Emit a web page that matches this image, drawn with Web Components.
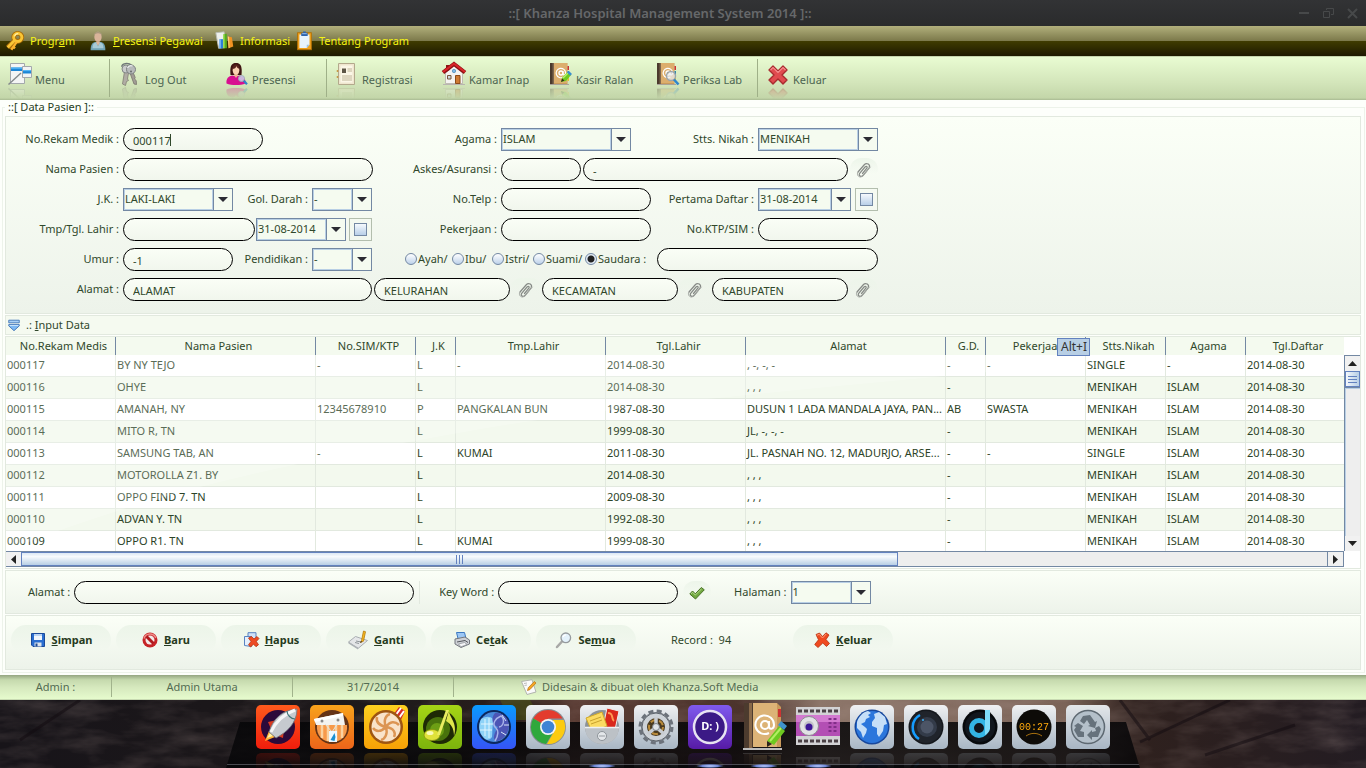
<!DOCTYPE html>
<html lang="id">
<head>
<meta charset="utf-8">
<title>::[ Khanza Hospital Management System 2014 ]::</title>
<style>
  :root {
    --ink: #30482b;
    --ink-soft: #536b52;
    --line: #e2e9df;
    --steel: #7388a3;
    --sky: #b8cfe5;
    --panel-top: #fbfff7;
    --panel-end: #edf3ea;
    --fs: 11px;
    --ctl: 23px;
  }
  body {
    margin: 0;
    font: var(--fs)/14px "Noto Sans", "Open Sans", sans-serif;
    color: var(--ink);
    background: #14100f;
  }
</style>
</head>
<body>
<kz-app>
  <kz-titlebar slot="top">::[ Khanza Hospital Management System 2014 ]::</kz-titlebar>
  <kz-menubar slot="top">
    <kz-menu-item icon="keys">Progr<u>a</u>m</kz-menu-item>
    <kz-menu-item icon="person"><u>P</u>resensi Pegawai</kz-menu-item>
    <kz-menu-item icon="chart">Informasi</kz-menu-item>
    <kz-menu-item icon="clipboard">Tentan<u>g</u> Program</kz-menu-item>
  </kz-menubar>
  <kz-toolbar slot="top">
    <kz-tool-group>
      <kz-tool icon="menu">Menu</kz-tool>
    </kz-tool-group>
    <kz-tool-group>
      <kz-tool icon="logout">Log Out</kz-tool>
      <kz-tool icon="woman">Presensi</kz-tool>
    </kz-tool-group>
    <kz-tool-group>
      <kz-tool icon="register">Registrasi</kz-tool>
      <kz-tool icon="house">Kamar Inap</kz-tool>
      <kz-tool icon="bookpen">Kasir Ralan</kz-tool>
      <kz-tool icon="booklens">Periksa Lab</kz-tool>
    </kz-tool-group>
    <kz-tool-group last>
      <kz-tool icon="cross">Keluar</kz-tool>
    </kz-tool-group>
  </kz-toolbar>

  <kz-panel><kz-patient-form></kz-patient-form></kz-panel>
  <kz-panel flat><kz-section-toggle>.: <u>I</u>nput Data</kz-section-toggle></kz-panel>
  <kz-panel flat grow><kz-patient-table></kz-patient-table></kz-panel>
  <kz-panel><kz-search-bar></kz-search-bar></kz-panel>
  <kz-panel>
    <kz-actions>
      <kz-action icon="disk"><u>S</u>impan</kz-action>
      <kz-action icon="forbid"><u>B</u>aru</kz-action>
      <kz-action icon="docdel"><u>H</u>apus</kz-action>
      <kz-action icon="edit"><u>G</u>anti</kz-action>
      <kz-action icon="printer">Ce<u>t</u>ak</kz-action>
      <kz-action icon="lens">Se<u>m</u>ua</kz-action>
      <span slot="record">Record :&nbsp; 94</span>
      <kz-action slot="end" icon="redx"><u>K</u>eluar</kz-action>
    </kz-actions>
  </kz-panel>

  <kz-statusbar slot="bottom"></kz-statusbar>
  <kz-dock slot="bottom"></kz-dock>
</kz-app>

<script>
const book = `
  <path d="M4 1h14.500v21H4z" fill="#c99a5b"/><path d="M5 1h13v20H5z" fill="#dcae6d"/>
  <path d="M1 1h4v21H1z" fill="#4b3a2d"/><path d="M3.500 1H5v21H3.500z" fill="#7d654d"/>
  <path d="M18.500 4H20v4h-1.500z" fill="#c33"/><path d="M18.500 9H20v4h-1.500z" fill="#38a"/><path d="M18.500 14H20v5h-1.500z" fill="#dfc331"/>
  <path d="M1 22.500h19" stroke="#a9a39b"/>
  <circle cx="12" cy="11" r="2" fill="none" stroke="#fff" stroke-width="1.300"/>
  <path d="M14 9v3.200c.4 1.300 2.600 1 2.600-1.200a4.700 4.700 0 1 0-2.200 4" fill="none" stroke="#fff" stroke-width="1.200"/>`;

const tile = (top, end, body) => `
  <defs><linearGradient id="t" x2="0" y2="1"><stop stop-color="${top}"/><stop offset="1" stop-color="${end}"/></linearGradient></defs>
  <rect width="44" height="44" rx="5" fill="url(#t)"/>${body}`;

const ICONS = {
  keys: [24, `
    <g fill="none" stroke="#a86a08" stroke-width="5"><circle cx="15" cy="8" r="4.500"/><path d="M12 11 4 19M11 15l-4 6"/></g>
    <g fill="none" stroke="#f9c534" stroke-width="3.200"><circle cx="15" cy="8" r="4.500"/><path d="M12 11 4 19"/></g>
    <path d="M14 13 8 21.500M10 18l2 2" fill="none" stroke="#fbb32c" stroke-width="2.500"/>
    <path d="M11.500 7a4 4 0 0 1 4-3" fill="none" stroke="#fff1ab" stroke-width="1.200"/>`],
  person: [24, `
    <path d="M4 22c-.2-6 2-8.500 5-9h6c3 .5 5.200 3 5 9z" fill="#6fa3b5"/><path d="M6 20c0-4 1-6 4-6.500L12 18l2-4.500c3 .5 4 2.500 4 6.500z" fill="#a8cbd6"/>
    <path d="m9.500 12.500 2.500 5 2.500-5z" fill="#dfb79b"/><ellipse cx="12" cy="7.500" rx="4" ry="5.500" fill="#d9b49a"/>
    <path d="M7.600 7C7 .3 17 .3 16.400 7c-1-2.800-2-3.500-4.400-3.500S8.600 4.200 7.600 7z" fill="#a9997c"/>`],
  chart: [24, `
    <path d="m2 3 9-1 2 17-8 1z" fill="#eef0ec" stroke="#b9bdb5"/>
    <path d="M6 10h4v10H6z" fill="#2c7fd6"/><path d="M6 10h1.500v10H6z" fill="#7ab9f3"/>
    <path d="m10 5 4-1v16h-4z" fill="#53ae1e"/><path d="m10 5 1.500-.4V20H10z" fill="#a9e45b"/>
    <path d="m15 7 4.500 1L21 18l-5 2z" fill="#f09322"/><path d="m15 7 1.500.3L17 19.500l-1 .5z" fill="#ffd07b"/>`],
  clipboard: [24, `
    <rect x="5" y="3" width="15" height="18.500" fill="#f0a21d" stroke="#b26f05"/>
    <path d="M7 5h11v11l-3 3.500H7z" fill="#e8f4fd"/><path d="M18 16h-3v3.500z" fill="#9cc4e4"/>
    <path d="M9 3h2V1.500h3V3h2v3.500H9z" fill="#2e64ad"/><path d="M10 4h5" stroke="#9cc5f0"/>`],
  menu: [24, `
    <path d="M2.500 1.500h14v20h-14z" fill="#f4f5f5" stroke="#a3a8ab"/><path d="M3 5.500h13V9H3z" fill="#1c86d6"/><path d="M3 5.500h13v1.300H3z" fill="#56b6f5"/>
    <path d="M14.500 4.500h9v11h-9z" fill="#f1f3f4" stroke="#a3a8ab"/><path d="M15 8h8v3.500h-8z" fill="#1c86d6"/><path d="M15 8h8v1.200h-8z" fill="#56b6f5"/>
    <path d="M.5 22.500 13 11" stroke="#83888a" stroke-width="1.400"/>`],
  logout: [24, `
    <path d="M4 5C3 1.500 10 .2 14 3.500" fill="none" stroke="#6f7777" stroke-width="1.400"/>
    <path d="M6.500 9.500 4.500 22l3 1.500 1-4 2-1-1-1.500 1-6z" fill="#b1ada5" stroke="#827d74" stroke-width=".8"/>
    <path d="m12 11 4 11 2.500.5-.3-4-1.700-1.500.7-1.500L14.500 9z" fill="#a29e96" stroke="#77726b" stroke-width=".8"/>
    <circle cx="8" cy="7" r="4" fill="#c9cbcb" stroke="#838787"/><circle cx="13" cy="7.500" r="4.500" fill="#b7baba" stroke="#7c8080"/>
    <path d="M9.500 6a4 4 0 0 1 5-2" fill="none" stroke="#edf0f0" stroke-width="1.200"/><circle cx="13" cy="9.500" r="1" fill="#686c6c"/>`],
  woman: [24, `
    <path d="M5.500 13C4.500 3 7 1 11 1s6.500 2 5.500 12z" fill="#3f1512"/>
    <path d="M1.500 21.500c-.5-5 2-7.500 6-8l3.500 1 3.500-1c4 .5 6.500 3.500 6 8-5 2-14 2-19 0z" fill="#d80f90"/>
    <path d="M9.300 11h3.400v2.500L11 16l-1.700-2.500z" fill="#edb48d"/><ellipse cx="11" cy="8.300" rx="3.300" ry="4.200" fill="#f9d2b1"/>
    <path d="M7.500 7c2 0 3.500-1 4-3 .5 2 1.500 2.500 3 3-.5-4-2-4.500-3.500-4.500S7.500 3.500 7.500 7z" fill="#57221b"/>
    <circle cx="16.500" cy="16.500" r="3" fill="#c9e0f1" fill-opacity=".8" stroke="#9dabb5"/><path d="m18.800 18.800 3.200 3.400" stroke="#2d84c8" stroke-width="2.200"/>`],
  register: [24, `
    <path d="M3.500 1.500h16v21h-16z" fill="#efe6ce" stroke="#b3a98c"/><path d="M5.500 3.500h12v17h-12z" fill="#fbf6e6"/>
    <path d="M7 6.500h4V11H7z" fill="#5e5647"/><path d="M12.500 7H17M12.500 9H17M7 14h10M7 16h10M7 18h10" stroke="#c0b698"/>
    <path d="M2.500 8v2M2.500 14v2" stroke="#c89a49" stroke-width="1.500"/>`],
  house: [24, `
    <path d="M3.500 11 12 4l8.500 7v10.500h-17z" fill="#f5f3f1" stroke="#b5afaa" stroke-width=".8"/>
    <path d="M4 3h3.500v5L4 10z" fill="#8d1717"/>
    <path d="M1 10.500 12 2l11 8.500" fill="none" stroke="#8c0f12" stroke-width="4"/><path d="M1 10 12 1.600 23 10" fill="none" stroke="#d8252a" stroke-width="2.200"/>
    <circle cx="12" cy="9" r="1.700" fill="#7cb9e6" stroke="#4b87b8" stroke-width=".7"/>
    <path d="M5.500 13.500H9V17H5.500z" fill="#cfd8dc" stroke="#77553a"/><path d="M13.500 13.500H18v8h-4.500z" fill="#cf7a33" stroke="#8c4b18"/>
    <path d="M1 22.500h22" stroke="#b9b5b0"/>`],
  bookpen: [24, book + `<path d="m12 20 1.500-5 5-5 3.500 3-5 6z" fill="#6ecb1f"/><path d="m14 16 5-5" stroke="#b5f16b" stroke-width="1.500"/><path d="m18 10.500 2-1.500 3 3-1.700 1.700z" fill="#3b8fd0"/><path d="m12 20 1-3.500 2.500 2z" fill="#33271b"/>`],
  booklens: [24, book + `<circle cx="15" cy="14" r="4.500" fill="#e8eef2" fill-opacity=".7" stroke="#9aa5ad" stroke-width="1.400"/><path d="m18 17.500 4.500 5" stroke="#2f86cc" stroke-width="2.600"/>`],
  cross: [24, `
    <path d="m3 8 4-4 5 5 5-5 4 4-5 5 5 5-4 4-5-5-5 5-4-4 5-5z" fill="#e04b4f" stroke="#a82a2e" stroke-width="1.400" stroke-linejoin="round"/>
    <path d="m4.500 8 2.500-2.500 5 5 5-5L19.500 8" fill="none" stroke="#f58d8d" stroke-width="1.200"/>`],
  clip: [16, `
    <path d="m2 10 6.500-7.500c2-2.200 6.500 0 4.500 3.500l-6 7.500c-1.600 1.800-4.600.6-3.500-2L9 5c1.400-1.400 2.700-.2 2 1l-4.500 5.500" fill="none" stroke="#868a86" stroke-width="1.200" stroke-linecap="round"/>
    <path d="M2 10c-1.500 2.500.2 5 2.500 5 2.500-.2 3.500-2.500 5-4l5-6.200" fill="none" stroke="#a5a9a4"/>`],
  down: [16, `<path d="M2 2.500h12v3H2z" fill="#a9d1f7" stroke="#3f72b5"/><path d="M2 7.500h12V9l-6 5.500L2 9z" fill="#7fb9f3" stroke="#3f72b5"/><path d="M3 8.500h10" stroke="#d7ebff"/>`],
  check: [16, `<path d="m.8 9 2.700-3L6.300 8.800l6-6.300 3 2.300L6.500 14z" fill="#72a942" stroke="#4a7227" stroke-linejoin="round"/><path d="m2 8.800 1.600-1.500L6.300 10l6.200-6" fill="none" stroke="#b5d98c"/>`],
  disk: [16, `<path d="M1.500 1.500h13v13H3l-1.500-1.500z" fill="#2a6ed0" stroke="#1b4a9b"/><path d="M4 2h8v6H4z" fill="#f1f6fc"/><path d="M4 3h8" stroke="#87b4ec"/><path d="M4.500 10.500h7v4h-7z" fill="#dfe5ec"/><path d="M5.500 11.500h2v3h-2z" fill="#1f4c94"/>`],
  forbid: [16, `<circle cx="8" cy="8" r="7.500" fill="#c62427"/><circle cx="8" cy="8" r="4.500" fill="#f4e9e8"/><path d="m4.500 4.500 7 7" stroke="#b01a1e" stroke-width="3"/><path d="M2 6.500A6.200 6.200 0 0 1 13.800 6" fill="none" stroke="#ef8b88" stroke-width="1.500"/>`],
  docdel: [16, `<path d="M5 .7h8v9H5z" fill="#cfe1f8" stroke="#5883c2"/><path d="M1.500 4.500h7v10l-7-1z" fill="#e5effc" stroke="#5883c2"/><path d="m5.500 6 3-1.500L11 7l3-2.500 2 2L13.300 9.500l2.200 3.200-2.500 2-2.500-2.500L7.500 15l-2-2.300L8 9.500z" fill="#ee4b23" stroke="#b83312" stroke-width=".8"/>`],
  edit: [20, `<path d="m.5 12 7-5.500 12 4L10 18.500z" fill="#e4e6e8" stroke="#a8adb1"/><path d="m.5 12 9.500 5.500v2L.5 13.500z" fill="#adb2b6"/><path d="m8 11 5 1M7 12.500l4 1" stroke="#8f9599"/><path d="m12.500 12.500 1-1.800L15.500 1l2 .7-2 9.500z" fill="#f8b81e" stroke="#b37a0a" stroke-width=".8"/><path d="m12.300 13 .5-2 1.500.8z" fill="#333"/>`],
  printer: [16, `<path d="M2.500.5h8l1.500 6H4z" fill="#9cc7f5" stroke="#3b78c2"/><path d="m1 7 10-2 4.500 3v4L7 15.500 1 12z" fill="#cdd0d5" stroke="#73777e"/><path d="m3 10 8-1.500 3 2" stroke="#55585e" fill="none"/><path d="m4.500 12 6-1.500 2.500 2-6 2.300z" fill="#f5f6f8" stroke="#8a8e94" stroke-width=".7"/>`],
  lens: [16, `<path d="m1 15 5-5.500" stroke="#a8a8a6" stroke-width="2.500" stroke-linecap="round"/><circle cx="9.800" cy="5.800" r="4.800" fill="#e4f2fb" stroke="#959a9d" stroke-width="1.300"/><path d="M7 5a3 3 0 0 1 3-2.200" stroke="#fff" fill="none" stroke-width="1.300"/>`],
  redx: [16, `<path d="M2 2.500 5.500 1l3 3.500L12 .8l3 2.200-3 4.500 3.500 4-3 3L8.800 11 4 15.500l-3.300-3L4.500 7.800z" fill="#ef4a20" stroke="#b7310e" stroke-width=".8" stroke-linejoin="round"/><path d="m2.800 3.300 2.500-1L8.500 6l3.700-4" fill="none" stroke="#fd9a78"/>`],
  note: [16, `<path d="M.5 2.500 11 .7 15 13l-9 2.500z" fill="#fafafa" stroke="#b2b5ae"/><path d="m3 4.500 3-.5M3.500 6.500 6 6" stroke="#bbb"/><path d="m6.500 11.500.8-2.800 6-6.200 1.700 1.500-6 6.500z" fill="#f6a623" stroke="#b4700e" stroke-width=".7"/>`],

  rocket: [44, tile('#ff5a1c', '#f01d0c', `
    <circle cx="22" cy="22" r="17" fill="#2b0a3a"/>
    <path d="m12 17 9-2-6 9zM28 24l-1 9-8-3z" fill="#d83920"/><path d="m9 36 4-10 6 6z" fill="#ffb43c"/><path d="m11 33 3-5 3 3z" fill="#fff6a8"/>
    <path d="M13 27C17 14 26 5 41 4c0 14-10 23-21 29z" fill="#c6cacf" stroke="#70757c" stroke-width=".8"/><path d="M15 27C20 16 28 9 39 5" stroke="#f5f6f7" stroke-width="3" fill="none"/>
    <path d="M31 6c0 4 4 8 8 8" stroke="#3f7475" stroke-width="1.200" fill="none"/>`)],
  store: [44, tile('#f8a21b', '#ec641a', `
    <circle cx="22" cy="22" r="17" fill="#653316"/><path d="M7 20h30c1 10-5 17-15 17S6 30 7 20z" fill="#f79a4b"/>
    <path d="M12 20v13M18 20v16M26 20v16M32 20v13" stroke="#fbd2a0" stroke-width="2.500"/>
    <path d="m4 14 29-6 2 12H6z" fill="#f3f3f1"/><path d="m4 14 29-6v3L5 17z" fill="#fff"/><circle cx="12" cy="16" r="1.500" fill="#888"/><circle cx="28" cy="15" r="1.500" fill="#888"/>
    <path d="m15 19 7 8 6-9" fill="none" stroke="#dce6ea"/><path d="M19 26h8v11h-8z" fill="#eef7fc"/><path d="m20.500 35 4-7 1 4-1 4z" fill="#1a8fd1"/>`)],
  candy: [44, tile('#fdd020', '#f6a006', `
    <path d="m29 10 6-8 6 4-4 9z" fill="#d62b2b"/><path d="m31 11 6-8M35 13l5-7" stroke="#fff" stroke-width="2"/>
    <circle cx="22" cy="22" r="17" fill="#9e5511"/><circle cx="22" cy="22" r="14.500" fill="#f9e3ca"/>
    <path d="M22 22c-8-2-10-6-9-10M22 22c-3-7 0-12 4-13M22 22c4-6 9-6 13-2M22 22c8 1 10 6 8 10M22 22c2 7-1 12-5 13M22 22c-5 5-10 5-13 1" fill="none" stroke="#dc9554" stroke-width="2.500"/>`)],
  music: [44, tile('#a6d516', '#7cb40c', `
    <circle cx="22" cy="22" r="17" fill="#1e2a05"/><circle cx="20" cy="24" r="12" fill="#49730c"/><circle cx="19" cy="25" r="7" fill="#6d9f14"/>
    <ellipse cx="14" cy="30" rx="8" ry="5.500" fill="#dfe23a" stroke="#8a9410" stroke-width=".8"/><path d="M19 30 28 5h3l-9 25z" fill="#e9ec62"/>
    <path d="M31 5c0 8 9 12 5 26 0-8-3-12-8-15z" fill="#dfe64c"/><ellipse cx="12" cy="28" rx="3.500" ry="2" fill="#f9fab6"/>`)],
  film: [44, tile('#0a9bff', '#3554f5', `
    <circle cx="22" cy="22" r="17" fill="#0c285f"/><circle cx="22" cy="22" r="15" fill="#4a8bdb"/>
    <path d="M9 14c5-3 9-3 12 0l-1 18c-3 4-6 3-8 1-5-5-6-12-3-19z" fill="#8fd3f8"/>
    <path d="M23 8c9-1 14 6 14 13-1 9-6 14-12 15-6-1-2-9 1-14-5-2-8-8-3-14z" fill="#4c55b5"/>
    <path d="M27 22c5-1 6-8 2-11-5 2-10 8-5 12 3 3 2 8-1 13" fill="none" stroke="#a9b4ea" stroke-width="1.500"/>
    <path d="M13 14v17M17 13v20M9 19h12M8 25h12M30 10l4 6M32 20h5M29 27l5 3" stroke="#e9f8ff" stroke-width=".9"/>`)],
  chrome: [44, tile('#eff0f2', '#a8b6c4', `
    <circle cx="22" cy="22" r="18" fill="#888e94"/><path d="M22 22 7.300 13.500A17 17 0 0 1 36.700 13.500H22z" fill="#e33b2e"/><path d="M22 22 7.300 13.500A17 17 0 0 0 20 39l8-13z" fill="#2fa83c"/>
    <path d="M37.700 15A17 17 0 0 1 21 39l8-14-2-10z" fill="#fccb10"/><circle cx="22" cy="22" r="8" fill="#f5f5f5"/><circle cx="22" cy="22" r="6.300" fill="#3f84d4"/>`)],
  files: [44, tile('#eff0f2', '#a8b6c4', `
    <circle cx="22" cy="22" r="17" fill="#8c9298"/><path d="m27 3 12 3-4 19-12-3z" fill="#d9281c" stroke="#eee"/><path d="M28 8c6 0 3 6 6 8" stroke="#ff9a52" fill="none" stroke-width="2"/>
    <path d="m6 13 16-6 5 14-15 6z" fill="#fbdb62" stroke="#d1a929"/><path d="m10 16 11-4M11 19l11-4" stroke="#c9a22e"/>
    <path d="M5 22h34c0 10-7 17-17 17S5 32 5 22z" fill="#bcc1c6"/><path d="M5 22.500h34" stroke="#eff1f3" stroke-width="1.500"/><circle cx="22" cy="31" r="4.500" fill="#e4e7ea" stroke="#8e9499"/><path d="M19 31h6" stroke="#979ca1"/>`)],
  gear: [44, tile('#eff0f2', '#a8b6c4', `
    <circle cx="22" cy="22" r="15" fill="#80868e"/><circle cx="22" cy="22" r="16" fill="none" stroke="#6c727b" stroke-width="3" stroke-dasharray="5 3.400"/>
    <circle cx="22" cy="22" r="14" fill="#cdd2d8" stroke="#5d636b"/><circle cx="22" cy="22" r="9" fill="#4a3a20"/><circle cx="22" cy="22" r="7" fill="none" stroke="#b98a3a" stroke-width="2" stroke-dasharray="6 3"/>
    <path d="M22 22V12M22 22l8 7M22 22l-8 7" stroke="#c8ccd2" stroke-width="3.500"/><circle cx="22" cy="22" r="3.500" fill="#e1e4e8" stroke="#7b8087"/>`)],
  smile: [44, tile('#7f5aee', '#571ba6', `
    <circle cx="22" cy="22" r="16" fill="#3b1a86" stroke="#e7e3f2" stroke-width="2.500"/>
    <text x="22" y="25" text-anchor="middle" font-family="Noto Sans" font-size="11" font-weight="700" fill="#fff">D: )</text>`)],
  address: [44, `
    <path d="M10-2h25l4 4v40H10z" fill="#c9995a"/><path d="M11-2h24v44H11z" fill="#dcb377"/><path d="M2-2h9v45H2z" fill="#4c3b2e"/><path d="M7-2h3v45H7z" fill="#88694a"/>
    <path d="M36 4h3v8h-3z" fill="#c33"/><path d="M1 44h39" stroke="#bcbcbc" stroke-width="2"/>
    <circle cx="23" cy="20" r="4" fill="none" stroke="#fff" stroke-width="2.200"/><path d="M27 16v6c1 3 5 2 5-2a9.300 9.300 0 1 0-5 8" fill="none" stroke="#fff" stroke-width="2"/>
    <path d="m25 36 12-15 6 5-11 14z" fill="#6dc820"/><path d="m28 36 11-13" stroke="#b1ee62" stroke-width="2"/><path d="m36 20 3-4 6 5-3 4z" fill="#3f92cc"/><path d="m25 42 0-6 5 3z" fill="#2c241c"/>`],
  video: [44, `
    <path d="M0 2h44v38H0z" fill="#d2d2d4"/><path d="M0 10h44v21H0z" fill="#b34fb4"/><path d="M0 10h44v7H0z" fill="#d37ad0"/>
    <path d="M2 6h40M2 36h40" stroke="#4b4145" stroke-width="3" stroke-dasharray="4 2"/>
    <path d="M34 13v16M39 13v16" stroke="#812e88" stroke-width="3" stroke-dasharray="2 2"/>
    <circle cx="13" cy="21" r="9.500" fill="#e1e1e4" stroke="#8d8d92"/><circle cx="13" cy="21" r="5" fill="#c1c1c8"/><circle cx="13" cy="22" r="3.500" fill="#3c1696"/>`],
  globe: [44, tile('#eff0f2', '#a8b6c4', `
    <circle cx="22" cy="22" r="17.500" fill="#17479c"/><circle cx="22" cy="22" r="16" fill="#2b76dc"/>
    <path d="M7 17c2-6 6-10 11-11l3 2-3 2 2 2-4 2-1 3-4 2 4 3 2 2-1 4-3 5-2-6-4-4zM24 9l5-2 6 5 2 7-3 1-1 6-4 6-2-3v-6l-5-2v-4l3-4z" fill="#c5def8"/>`)],
  dial: [44, tile('#eff0f2', '#a8b6c4', `
    <circle cx="22" cy="22" r="17.500" fill="#15181d"/><circle cx="22" cy="22" r="16" fill="#20242b"/><circle cx="23" cy="22" r="10" fill="#333b49"/><circle cx="23" cy="22" r="6.500" fill="#4c5566"/>
    <path d="M16 10a14 14 0 0 0-1 24" fill="none" stroke="#159cff" stroke-width="2.500"/><circle cx="19" cy="15" r="1" fill="#39b5ff"/>`)],
  deepin: [44, tile('#eff0f2', '#a8b6c4', `
    <circle cx="22" cy="22" r="17.500" fill="#07090c"/><circle cx="22" cy="22" r="15" fill="#11161d"/><circle cx="21" cy="23" r="7.500" fill="none" stroke="#33b5e5" stroke-width="5"/><path d="M27 5h5v19a9 9 0 0 1-5 6z" fill="#7fdcf9"/>`)],
  clock: [44, tile('#eff0f2', '#a8b6c4', `
    <circle cx="22" cy="22" r="17.500" fill="#0d0b08"/><path d="M14 31c5-3.500 11-3.500 16 0" stroke="#a8700f" fill="none"/>
    <text x="22" y="25" text-anchor="middle" font-family="Liberation Mono" font-size="10" fill="#ffa90c">00:27</text>`)],
  trash: [44, tile('#e3e6e9', '#a8b6c4', `
    <circle cx="22" cy="22" r="16.500" fill="#b4c0ca" stroke="#5e6972" stroke-width="1.500"/>
    <g fill="#66727c"><path d="m17 11 7-1 5 7 2-1-2 7-7-2 2-1-3-5-3 4-4-3z"/><path d="m12 18 5 3-3 5 4 1v5h-6l-4-7 2-3-2-1z"/><path d="M35 24 32 32h-6v3l-5-5 5-5v2l4-1-1-3 4-2z"/></g>`)],
};

const controls = `
  input, select, button { font: inherit; color: inherit; margin: 0; box-sizing: border-box; }
  input:focus { outline: none; }
  .pill {
    height: var(--ctl);
    min-width: 0;
    padding: 1px 9px 0;
    border: 1px solid #000;
    border-radius: 12px;
    background: linear-gradient(#fafef6, #f1f6ed);
  }
  .combo {
    display: grid;
    grid-template-columns: 1fr 19px;
    height: var(--ctl);
    box-sizing: border-box;
    border: 1px solid var(--steel);
    background: #f5fbf0;
  }
  .combo select {
    grid-area: 1 / 1 / 2 / 2;
    appearance: none;
    min-width: 0;
    padding: 0 0 2px;
    border: 1px solid var(--sky);
    border-radius: 0;
    background: none;
  }
  .combo svg {
    width: 18px;
    height: 21px;
    border-left: 1px solid var(--steel);
    pointer-events: none;
  }
  .clip {
    display: grid;
    place-items: center;
    height: var(--ctl);
    padding: 0;
    border: 0;
    border-radius: 12px;
    background: linear-gradient(#edf5ea, transparent 70%);
  }
`;

const combo = (id, value, width) => `
  <span class="combo" style="width:${width}px">
    <select id="${id}" aria-label="${id}"><option>${value}</option></select>
    <svg viewBox="0 0 18 21" aria-hidden="true"><path d="M4 8h10l-5 5z" fill="#2b2b33"/></svg>
  </span>`;

const pill = (id, width, value = '') =>
  `<input class="pill" id="${id}" aria-label="${id}" style="width:${width}px" value="${value}">`;

/** Defines an element whose shadow root holds fixed markup. */
function define(name, css, html, setup) {
  const template = document.createElement('template');
  template.innerHTML = `<style>${css}</style>${html}`;
  customElements.define(name, class extends HTMLElement {
    connectedCallback() {
      if (this.shadowRoot) return;
      const shadow = this.attachShadow({ mode: 'open' });
      shadow.append(template.content.cloneNode(true));
      setup?.(this, shadow);
    }
  });
}

const fillIcon = (host, shadow) => {
  shadow.querySelector('kz-icon').setAttribute('name', host.getAttribute('icon'));
};

class KzIcon extends HTMLElement {
  static observedAttributes = ['name'];

  constructor() {
    super();
    this.attachShadow({ mode: 'open' });
  }

  attributeChangedCallback() {
    const [box, body] = ICONS[this.getAttribute('name')] ?? [16, ''];
    this.shadowRoot.innerHTML = `
      <style>
        :host { display: block; flex: none; width: ${box}px; height: ${box}px; }
        svg { display: block; width: 100%; height: 100%; overflow: visible; }
      </style>
      <svg viewBox="0 0 ${box} ${box}" aria-hidden="true">${body}</svg>`;
  }
}
customElements.define('kz-icon', KzIcon);

define('kz-app', `
  :host { display: flex; flex-direction: column; height: 100vh; min-height: 660px; }
  main { flex: 1; min-height: 0; display: flex; padding: 0 1px 2px 2px; background: #fdfffb; }
  fieldset {
    flex: 1;
    min-width: 0;
    display: flex;
    flex-direction: column;
    gap: 1px;
    margin: 0;
    padding: 1px 3px 2px 2px;
    border: 1px solid #edf3ea;
  }
  legend { height: 15px; padding: 0 3px; color: #263c22; }
`, `
  <slot name="top"></slot>
  <main><fieldset><legend>::[ Data Pasien ]::</legend><slot></slot></fieldset></main>
  <slot name="bottom"></slot>
`);

define('kz-titlebar', `
  :host {
    display: grid;
    grid-template-columns: 1fr 70px;
    align-items: center;
    height: 26px;
    background: linear-gradient(#323335, #2a2b2c);
    color: #66686a;
    font-size: 13px;
    font-weight: 600;
  }
  .name { padding-left: 24px; text-align: center; }
  .buttons { display: flex; gap: 10px; justify-content: flex-end; padding-right: 7px; }
  button { display: block; width: 14px; height: 14px; padding: 0; border: 0; background: none; color: #47494a; }
  svg { display: block; }
`, `
  <span class="name"><slot></slot></span>
  <span class="buttons">
    <button aria-label="Minimize"><svg width="14" height="14"><path d="M2 7h10" stroke="currentColor" stroke-width="2"/></svg></button>
    <button aria-label="Restore"><svg width="14" height="14" fill="none" stroke="currentColor"><path d="M5.500 4V2.500h7v6H10M2.500 5.500h6v6h-6z"/></svg></button>
    <button aria-label="Close"><svg width="14" height="14"><path d="m3 3 9 9m0-9-9 9" stroke="currentColor" stroke-width="2"/></svg></button>
  </span>
`);

define('kz-menubar', `
  :host {
    display: grid;
    grid-template-columns: 83px 127px 79px auto;
    justify-content: start;
    height: 30px;
    padding-left: 4px;
    background: linear-gradient(#b2b07c, #7b784a 50%, #403c00 50%, #1d1900);
  }
`, '<slot></slot>');

define('kz-menu-item', `
  :host { display: flex; }
  button { display: flex; align-items: center; gap: 4px; padding: 0; border: 0; background: none; font: inherit; color: #f6f414; white-space: nowrap; }
  kz-icon { width: 22px; height: 22px; }
`, '<button><kz-icon></kz-icon><span><slot></slot></span></button>', fillIcon);

define('kz-toolbar', `
  :host {
    display: flex;
    height: 44px;
    box-sizing: border-box;
    border-top: 1px solid #c4d4ac;
    background: linear-gradient(#e9fcd2, #d3e5ba 60%, #c3d6a9 95%, #a9bb93);
  }
`, '<slot></slot>');

define('kz-tool-group', `
  :host { display: flex; gap: 6px; margin: 2px 0 3px; padding-left: 8px; border-right: 1px solid #9fb088; }
  :host([last]) { border: 0; }
`, '<slot></slot>');

define('kz-tool', `
  :host { display: block; width: 101px; }
  button { display: flex; gap: 3px; width: 100%; padding: 3px 0 0; border: 0; background: none; font: inherit; color: #4c6451; text-align: left; white-space: nowrap; }
  kz-icon { -webkit-box-reflect: below 1px linear-gradient(transparent 50%, rgba(0, 0, 0, .3)); }
  span { padding-top: 11px; }
`, '<button><kz-icon></kz-icon><span><slot></slot></span></button>', fillIcon);

define('kz-panel', `
  :host { display: block; border: 1px solid var(--line); background: linear-gradient(var(--panel-top), var(--panel-end)); }
  :host([flat]) { background: #f5faf0; }
  :host([grow]) { flex: 1; min-height: 0; display: flex; }
`, '<slot></slot>');

define('kz-patient-form', controls + `
  :host { display: block; padding: 11px 0 12px; }
  form {
    display: grid;
    grid-template-columns: 117px 250px 128px 150px 107px 120px;
    row-gap: 7px;
    align-items: center;
  }
  label.cap { padding: 0 4px 2px 0; text-align: right; white-space: nowrap; }
  #rm:focus { background: linear-gradient(var(--ink), var(--ink)) 46px 5px / 1px 12px no-repeat, linear-gradient(#fafef6, #f1f6ed); }
  .run { display: flex; align-items: center; }
  .run .cap { flex: 1; }
  .second { padding-right: 1px; }
  .rest { grid-column: span 3; }
  .wide { grid-column: span 5; }
  .radios { grid-column: span 4; display: flex; align-items: center; padding-left: 32px; }
  .radios label { display: flex; align-items: center; gap: 1px; padding-bottom: 1px; }
  .radios input[type=radio] {
    appearance: none;
    width: 12px;
    height: 12px;
    border: 1px solid var(--steel);
    border-radius: 50%;
    background: linear-gradient(#fff, #bdd2ea);
  }
  .radios input[type=radio]:checked { background: radial-gradient(circle, #222 3px, #e4edf6 4px); }
  .box { display: grid; place-items: center; width: 21px; height: 21px; border: 1px solid #b3beae; }
  .box input { appearance: none; width: 13px; height: 13px; border: 1px solid var(--steel); background: linear-gradient(#f5f9fd, #b9cfe8); }
`, `
  <form>
    <label class="cap" for="rm">No.Rekam Medik :</label>
    ${pill('rm', 140, '000117')}
    <label class="cap" for="agama">Agama :</label>
    ${combo('agama', 'ISLAM', 130)}
    <label class="cap" for="nikah">Stts. Nikah :</label>
    ${combo('nikah', 'MENIKAH', 120)}

    <label class="cap" for="nama">Nama Pasien :</label>
    ${pill('nama', 250)}
    <label class="cap" for="askes">Askes/Asuransi :</label>
    <span class="run rest" style="gap:2px">
      ${pill('askes', 80)}${pill('asuransi', 265, '-')}
      <button type="button" class="clip" style="width:28px" aria-label="Pilih asuransi"><kz-icon name="clip"></kz-icon></button>
    </span>

    <label class="cap" for="jk">J.K. :</label>
    <span class="run second">${combo('jk', 'LAKI-LAKI', 110)}<label class="cap" for="darah">Gol. Darah :</label>${combo('darah', '-', 60)}</span>
    <label class="cap" for="telp">No.Telp :</label>
    ${pill('telp', 150)}
    <label class="cap" for="daftar">Pertama Daftar :</label>
    <span class="run" style="gap:4px">${combo('daftar', '31-08-2014', 93)}<span class="box"><input type="checkbox" aria-label="Pakai tanggal daftar"></span></span>

    <label class="cap" for="tmp">Tmp/Tgl. Lahir :</label>
    <span class="run second" style="justify-content:space-between"><span class="run" style="gap:1px">${pill('tmp', 132)}${combo('lahir', '31-08-2014', 90)}</span><span class="box"><input type="checkbox" aria-label="Pakai tanggal lahir"></span></span>
    <label class="cap" for="kerja">Pekerjaan :</label>
    ${pill('kerja', 150)}
    <label class="cap" for="ktp">No.KTP/SIM :</label>
    ${pill('ktp', 120)}

    <label class="cap" for="umur">Umur :</label>
    <span class="run second">${pill('umur', 110, '-1')}<label class="cap" for="didik">Pendidikan :</label>${combo('didik', '-', 60)}</span>
    <span class="radios">
      <label style="width:47px"><input type="radio" name="kel">Ayah/</label>
      <label style="width:40px"><input type="radio" name="kel">Ibu/</label>
      <label style="width:41px"><input type="radio" name="kel">Istri/</label>
      <label style="width:52px"><input type="radio" name="kel">Suami/</label>
      <label style="flex:1"><input type="radio" name="kel" checked>Saudara :</label>
      ${pill('keluarga', 221)}
    </span>

    <label class="cap" for="alamat">Alamat :</label>
    <span class="run wide">
      <span class="run" style="gap:2px">${pill('alamat', 249, 'ALAMAT')}${pill('kelurahan', 136, 'KELURAHAN')}</span>
      <button type="button" class="clip" style="width:32px" aria-label="Pilih kelurahan"><kz-icon name="clip"></kz-icon></button>
      ${pill('kecamatan', 136, 'KECAMATAN')}
      <button type="button" class="clip" style="width:34px" aria-label="Pilih kecamatan"><kz-icon name="clip"></kz-icon></button>
      ${pill('kabupaten', 136, 'KABUPATEN')}
      <button type="button" class="clip" style="width:30px" aria-label="Pilih kabupaten"><kz-icon name="clip"></kz-icon></button>
    </span>
  </form>
`, (host, shadow) => {
  const first = shadow.querySelector('#rm');
  first.focus();
  first.setSelectionRange(6, 6);
});

define('kz-section-toggle', `
  :host { display: block; }
  button { display: flex; align-items: center; gap: 5px; height: 18px; padding: 0 0 0 1px; border: 0; background: none; font: inherit; color: inherit; }
  kz-icon { width: 14px; height: 14px; }
`, '<button><kz-icon name="down"></kz-icon><span><slot></slot></span></button>');

const COLUMNS = [
  ['No.Rekam Medis', 110], ['Nama Pasien', 200], ['No.SIM/KTP', 100], ['J.K', 40],
  ['Tmp.Lahir', 150], ['Tgl.Lahir', 140], ['Alamat', 200], ['G.D.', 40],
  ['Pekerjaan', 100], ['Stts.Nikah', 80], ['Agama', 80], ['Tgl.Daftar'],
];

const ROWS = [
  ['000117', 'BY NY TEJO', '-', 'L', '-', '2014-08-30', ', -, -, -', '-', '-', 'SINGLE', '-'],
  ['000116', 'OHYE', '', 'L', '', '2014-08-30', ', , ,', '-', '', 'MENIKAH', 'ISLAM'],
  ['000115', 'AMANAH, NY', '12345678910', 'P', 'PANGKALAN BUN', '1987-08-30', 'DUSUN 1 LADA MANDALA JAYA, PAN...', 'AB', 'SWASTA', 'MENIKAH', 'ISLAM'],
  ['000114', 'MITO R, TN', '', 'L', '', '1999-08-30', 'JL, -, -, -', '-', '', 'MENIKAH', 'ISLAM'],
  ['000113', 'SAMSUNG TAB, AN', '-', 'L', 'KUMAI', '2011-08-30', 'JL. PASNAH NO. 12, MADURJO, ARSE...', '-', '-', 'SINGLE', 'ISLAM'],
  ['000112', 'MOTOROLLA Z1. BY', '', 'L', '', '2014-08-30', ', , ,', '-', '', 'MENIKAH', 'ISLAM'],
  ['000111', 'OPPO FIND 7. TN', '', 'L', '', '2009-08-30', ', , ,', '-', '', 'MENIKAH', 'ISLAM'],
  ['000110', 'ADVAN Y. TN', '', 'L', '', '1992-08-30', ', , ,', '-', '', 'MENIKAH', 'ISLAM'],
  ['000109', 'OPPO R1. TN', '', 'L', 'KUMAI', '1999-08-30', ', , ,', '-', '', 'MENIKAH', 'ISLAM'],
];

define('kz-patient-table', `
  :host {
    position: relative;
    flex: 1;
    min-width: 0;
    display: grid;
    grid-template: 18px minmax(0, 1fr) 17px / minmax(0, 1fr) 16px;
    background: #fff;
  }
  .view { position: relative; grid-area: 1 / 1 / 3 / 2; overflow: hidden; }
  table { width: 100%; table-layout: fixed; border-collapse: separate; border-spacing: 0; }
  th, td { box-sizing: border-box; overflow: hidden; white-space: nowrap; }
  th { height: 18px; padding: 0 0 0 6px; font-weight: 400; border-right: 1px solid var(--steel); background: #f4faef; }
  th:last-child { border-right: 0; }
  td { height: 22px; padding: 0 1px 2px; color: #2c4327; border-right: 1px solid var(--line); border-bottom: 1px solid var(--line); }
  td:last-child { border-right: 0; }
  tr:nth-child(even) td { background: #f3f9ee; }
  .gloss { position: absolute; top: 18px; left: 0; width: 100%; height: 196px; pointer-events: none; }
  .v, .h { display: flex; background: #eee; }
  .v { grid-area: 2 / 2; flex-direction: column; border-left: 1px solid var(--steel); border-top: 1px solid var(--steel); }
  .h { grid-area: 3 / 1; border: solid var(--steel); border-width: 1px 1px 1px 0; box-sizing: border-box; height: 16px; }
  .v svg, .h svg { display: block; flex: none; background: #f1f1f1; }
  .v .thumb { height: 14px; background: linear-gradient(90deg, #f4f8fc, #b8cfe5); }
  .v .track { flex: 1; border-top: 1px solid var(--steel); box-shadow: inset 1px 1px var(--sky); }
  .h .thumb { flex: 876; background: linear-gradient(#dbe7f3, #f8fbfd 30%, #b8cfe5); }
  .h .track { flex: 429; }
  .thumb { display: grid; place-items: center; border: 1px solid #6382bf; }
  .tip { position: absolute; top: 1px; right: 270px; padding: 0 2px 0 3px; border: 1px solid #6382bf; background: #b8cfe5; color: #333; font-size: 12px; line-height: 16px; }
`, `
  <div class="view">
    <table>
      <colgroup>${COLUMNS.map(([, w]) => `<col${w ? ` style="width:${w}px"` : ''}>`).join('')}</colgroup>
      <thead><tr>${COLUMNS.map(([name]) => `<th scope="col">${name}</th>`).join('')}</tr></thead>
      <tbody>${ROWS.map((r) => `<tr>${[...r, '2014-08-30'].map((c) => `<td>${c}</td>`).join('')}</tr>`).join('')}</tbody>
    </table>
    <svg class="gloss" viewBox="0 0 1338 196" preserveAspectRatio="none" aria-hidden="true">
      <path d="M0 0H1150C900 28 640 42 430 82 230 118 120 148 0 196z" fill="#fff" fill-opacity=".22"/>
    </svg>
  </div>
  <div class="v">
    <svg width="15" height="15"><path d="M3 10h9L7.500 5z" fill="#222"/></svg>
    <div class="thumb"><svg width="9" height="7" style="background:none"><path d="M0 .5h9M0 3.500h9M0 6.500h9" stroke="#6382bf"/></svg></div>
    <div class="track"></div>
    <svg width="15" height="15"><path d="M3 5h9L7.500 10z" fill="#222"/></svg>
  </div>
  <div class="h">
    <svg width="15" height="14"><path d="M10 3v9L5 7.500z" fill="#222"/></svg>
    <div class="thumb"><svg width="7" height="9" style="background:none"><path d="M.5 0v9M3.500 0v9M6.500 0v9" stroke="#6382bf"/></svg></div>
    <div class="track"></div>
    <svg width="15" height="14" style="border-left:1px solid #7388a3"><path d="M5 3v9l5-4.500z" fill="#222"/></svg>
  </div>
  <div class="tip" role="tooltip">Alt+I</div>
`);

define('kz-search-bar', controls + `
  :host { display: flex; align-items: center; padding: 10px 0 9px 22px; }
  label { padding: 0 4px 2px 0; white-space: nowrap; }
  .divider { width: 1px; height: 23px; margin: 0 19px 0 5px; background: var(--line); }
  .clip { width: 28px; margin: 0 23px 0 5px; }
`, `
  <label for="cari">Alamat :</label>${pill('cari', 340)}
  <span class="divider"></span>
  <label for="key">Key Word :</label>${pill('key', 180)}
  <button class="clip" aria-label="Cari"><kz-icon name="check"></kz-icon></button>
  <label for="hal">Halaman :</label>${combo('hal', '1', 80)}
`);

define('kz-actions', `
  :host { display: flex; align-items: center; gap: 5px; padding: 9px 0 14px 5px; }
  .record { width: 117px; padding-left: 30px; }
`, '<slot></slot><span class="record"><slot name="record"></slot></span><slot name="end"></slot>');

define('kz-action', `
  :host { display: block; width: 100px; }
  button {
    display: flex;
    align-items: center;
    justify-content: center;
    gap: 6px;
    width: 100%;
    height: 30px;
    padding: 0;
    border: 0;
    border-radius: 20px;
    background: linear-gradient(#ecf5e9, #f1f7ee 70%, transparent);
    font: inherit;
    font-weight: 700;
    color: #263a20;
  }
`, '<button><kz-icon></kz-icon><span><slot></slot></span></button>', fillIcon);

define('kz-statusbar', `
  :host {
    display: grid;
    grid-template-columns: 112px 181px 161px 1fr;
    height: 25px;
    box-sizing: border-box;
    background: linear-gradient(#94a681, #c5d9ad 20%, #d5e8bd 50%, #e6fbcd);
    border-bottom: 1px solid #c8dab2;
    color: var(--ink-soft);
  }
  span { display: flex; align-items: center; justify-content: center; margin: 2px 0; border-right: 1px solid #a1b38c; white-space: nowrap; }
  span:last-child { justify-content: flex-start; gap: 5px; padding-left: 67px; border: 0; }
`, `
  <span>Admin :</span><span>Admin Utama</span><span>31/7/2014</span>
  <span><kz-icon name="note"></kz-icon>Didesain &amp; dibuat oleh Khanza.Soft Media</span>
`);

const APPS = ['rocket', 'store', 'candy', 'music', 'film', 'chrome', 'files*', 'gear', 'smile*', 'address*', 'video*', 'globe', 'dial', 'deepin', 'clock', 'trash'];

define('kz-dock', `
  :host { position: relative; display: flex; justify-content: center; height: 68px; overflow: hidden; background: #1b1413; }
  .rock { position: absolute; inset: 0; width: 100%; height: 100%; }
  nav { position: relative; display: flex; gap: 10px; padding: 5px 30px 0; }
  nav::before {
    content: "";
    position: absolute;
    inset: 22px 0 0;
    background: linear-gradient(rgba(6, 6, 8, .86), rgba(6, 6, 8, .8) 42px, #4a4a50 42px, #4a4a50 43px, #08080a 43px);
    clip-path: polygon(14px 0, calc(100% - 14px) 0, 100% 100%, 0 100%);
  }
  button { position: relative; display: flex; align-items: flex-start; width: 44px; height: 63px; padding: 0; border: 0; background: none; }
  kz-icon { -webkit-box-reflect: below 4px linear-gradient(transparent 60%, rgba(0, 0, 0, .2)); }
  .on::after { content: ""; position: absolute; left: 8px; right: 8px; bottom: 0; height: 4px; background: radial-gradient(closest-side, #c5d5ff, #6d86d8 60%, transparent); }
`, `
  <svg class="rock" viewBox="0 0 1366 68" preserveAspectRatio="none" aria-hidden="true">
    <defs>
      <filter id="grain" x="0" y="0" width="100%" height="100%">
        <feTurbulence type="fractalNoise" baseFrequency=".02 .06" numOctaves="4" seed="8"/>
        <feColorMatrix values="0 0 0 0 .5  0 0 0 0 .38  0 0 0 0 .35  1.600 0 0 0 -.6"/>
      </filter>
      <linearGradient id="base"><stop stop-color="#171419"/><stop offset=".3" stop-color="#1f1a1b"/><stop offset=".38" stop-color="#2c1f1c"/><stop offset=".42" stop-color="#5a3c34"/><stop offset=".55" stop-color="#4b332c"/><stop offset=".6" stop-color="#8d766a"/><stop offset=".78" stop-color="#7b6358"/><stop offset=".83" stop-color="#2f211e"/><stop offset="1" stop-color="#231c22"/></linearGradient>
    </defs>
    <path d="M0 0h1366v68H0z" fill="url(#base)"/>
    <path d="M0 0h1366v68H0z" filter="url(#grain)" opacity=".25"/>
    <path d="M500 0h30l12 20h-32z" fill="#4e5a12" opacity=".5"/>
    <path d="m1140 42 90-42M1205 55l90-30M20 40l60-40M1120 0l30 40" stroke="#120b10" stroke-width="3" opacity=".5"/>
  </svg>
  <nav>${APPS.map((a) => {
    const name = a.replace('*', '');
    return `<button class="${a === name ? '' : 'on'}" aria-label="${name}"><kz-icon name="${name}"></kz-icon></button>`;
  }).join('')}</nav>
`);
</script>
</body>
</html>
